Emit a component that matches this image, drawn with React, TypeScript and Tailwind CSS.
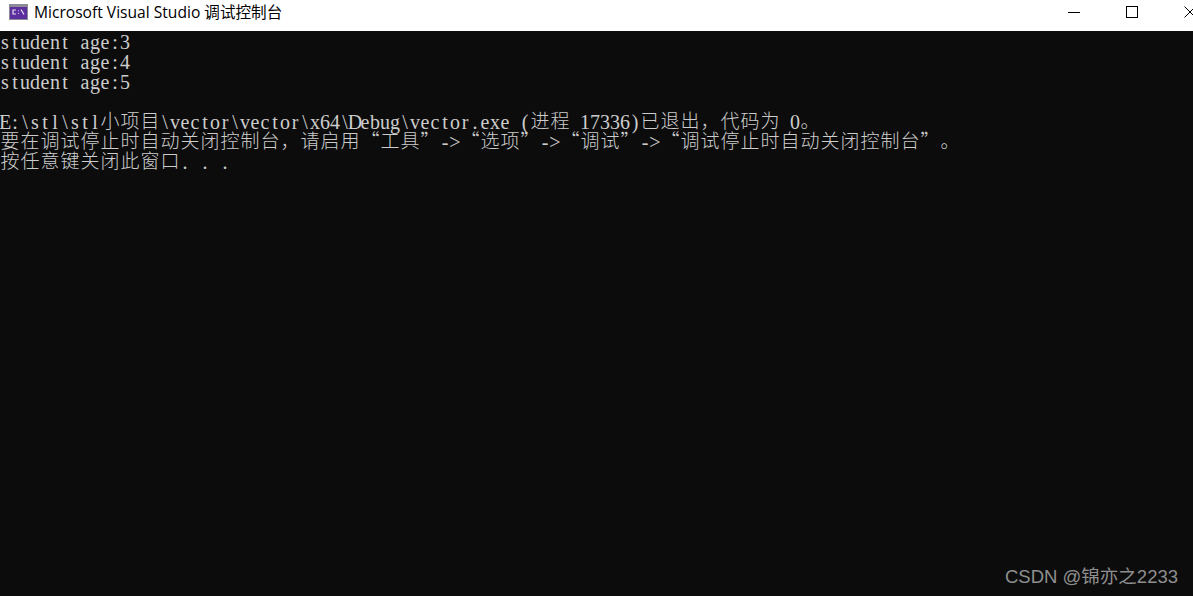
const LINES = [
  'student age:3',
  'student age:4',
  'student age:5',
  '',
  'E:\\stl\\stl小项目\\vector\\vector\\x64\\Debug\\vector.exe (进程 17336)已退出，代码为 0。',
  '要在调试停止时自动关闭控制台，请启用“工具”->“选项”->“调试”->“调试停止时自动关闭控制台”。',
  '按任意键关闭此窗口. . .',
];

// console grid: narrow chars take one 10px cell, CJK and curly quotes take two
function ConsoleLine({ text }: { text: string }) {
  return (
    <div className="flex h-5 items-start whitespace-pre">
      {Array.from(text).map((ch, i) =>
        ch.charCodeAt(0) > 255 ? (
          <span
            key={i}
            className="flex w-5 shrink-0 justify-center font-['Noto_Sans_CJK_SC',sans-serif] text-[19px] leading-[14px] font-light"
          >
            {ch}
          </span>
        ) : (
          <span
            key={i}
            className="flex w-2.5 shrink-0 justify-center font-['Liberation_Serif',serif] text-[20px] leading-[18px]"
          >
            {ch}
          </span>
        ),
      )}
    </div>
  );
}

function ConsoleIcon() {
  return (
    <svg width="19" height="16" viewBox="0 0 19 16" className="shrink-0">
      <rect x="0" y="0" width="19" height="16" fill="#8d8a98" />
      <rect x="1" y="3" width="17" height="12" fill="#5b2e9e" />
      <path d="M7 6H4v4h3M9.5 6.5v.8M9.5 9v.8M12 5.5l3 5" stroke="#e6e2f2" strokeWidth="1.2" fill="none" />
    </svg>
  );
}

export default function App() {
  return (
    <div className="flex h-[596px] w-[1193px] flex-col overflow-hidden bg-[#0c0c0c]">
      <div className="flex h-[31px] shrink-0 items-center bg-white pb-[7px] pl-[9px]">
        <ConsoleIcon />
        <span className="ml-[6px] font-['Open_Sans','Noto_Sans_CJK_SC',sans-serif] text-[15.6px] leading-5 text-black">
          Microsoft Visual Studio 调试控制台
        </span>
        <div className="-mr-[26px] ml-auto flex h-full shrink-0">
          <div className="grid h-full w-[58px] place-items-center">
            <svg width="12" height="1" viewBox="0 0 12 1">
              <rect width="12" height="1" fill="#000" />
            </svg>
          </div>
          <div className="grid h-full w-[58px] place-items-center">
            <svg width="12" height="12" viewBox="0 0 12 12">
              <rect x="0.5" y="0.5" width="11" height="11" fill="none" stroke="#000" />
            </svg>
          </div>
          <div className="grid h-full w-[58px] place-items-center">
            <svg width="12" height="12" viewBox="0 0 12 12">
              <path d="M0.5 0.5l11 11M11.5 0.5l-11 11" fill="none" stroke="#000" />
            </svg>
          </div>
        </div>
      </div>
      <div className="relative flex-1 pt-[2px] text-[#cccccc]">
        {LINES.map((line, i) => (
          <ConsoleLine key={i} text={line} />
        ))}
        <span className="absolute right-[15px] bottom-[5px] font-['Liberation_Sans','Noto_Sans_CJK_SC',sans-serif] text-[18.5px] text-[#8f8f8f]">
          CSDN @锦亦之2233
        </span>
      </div>
    </div>
  );
}
